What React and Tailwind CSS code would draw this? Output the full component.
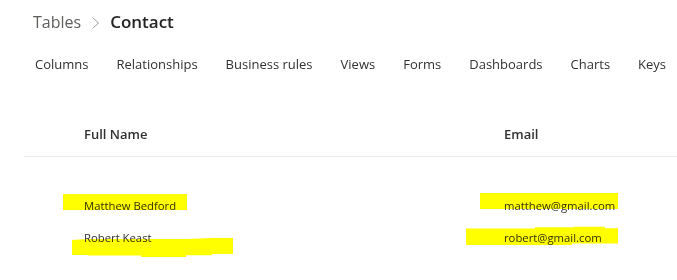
import React from "react";

const tabs = ["Columns", "Relationships", "Business rules", "Views", "Forms", "Dashboards", "Charts", "Keys"];
const rows = [
  { name: "Matthew Bedford", email: "matthew@gmail.com" },
  { name: "Robert Keast", email: "robert@gmail.com" },
];

export default function App() {
  return (
    <div
      className="w-[677px] h-[280px] overflow-hidden bg-white text-[#323130]"
      style={{ fontFamily: '"Open Sans", "Noto Sans", sans-serif' }}
    >
      <div className="flex items-baseline pl-[33px] pt-[10px] h-[34px] leading-[24px]">
        <span className="text-[16px] text-[#605e5c]">Tables</span>
        <svg width="9" height="12" viewBox="0 0 9 12" className="ml-[10px] mr-[10px] self-center mt-[1px]">
          <polyline points="1.5,0.5 7.5,6 1.5,11.5" fill="none" stroke="#a19f9d" strokeWidth="1" />
        </svg>
        <span className="text-[17px] font-semibold text-[#242424]">Contact</span>
      </div>

      <div className="flex gap-[28px] pl-[35px] mt-[20px] h-[20px] leading-[20px] text-[13px]">
        {tabs.map((t) => (
          <span key={t} className="whitespace-nowrap">{t}</span>
        ))}
      </div>

      <div className="ml-[24px] mt-[38px]">
        <div className="grid grid-cols-[480px_1fr] py-[12px] border-b border-[#edebe9] text-[13px] font-semibold leading-[20px]">
          <div className="pl-[60px]">Full Name</div>
          <div>Email</div>
        </div>
        <div className="relative pt-[33px]">
          {rows.map((r) => (
            <div key={r.name} className="grid grid-cols-[480px_1fr] h-[32px] items-center text-[11.3px] leading-[16px]">
              <div className="pl-[60px]">{r.name}</div>
              <div>{r.email}</div>
            </div>
          ))}
          <svg
            className="absolute left-0 top-0 pointer-events-none mix-blend-multiply"
            width="653"
            height="123"
            viewBox="0 0 653 123"
          >
            <rect x="39" y="37" width="124" height="16" fill="#ffff00" />
            <polygon
              fill="#ffff00"
              points="48,83 64,82 162,82 188,81 209,81 209,97 188,97 188,98.3 162,98.3 162,100 117,100 117,98.5 64,98.5 64,98 48,98"
            />
            <rect x="456" y="36" width="138" height="16" fill="#ffff00" />
            <polygon
              fill="#ffff00"
              points="442,71.5 511,71.5 511,70.3 550,70.3 550,69.7 581,69.7 581,71.3 594,71.3 594,86.5 548,86.5 548,88 442,88"
            />
          </svg>
        </div>
      </div>
    </div>
  );
}
